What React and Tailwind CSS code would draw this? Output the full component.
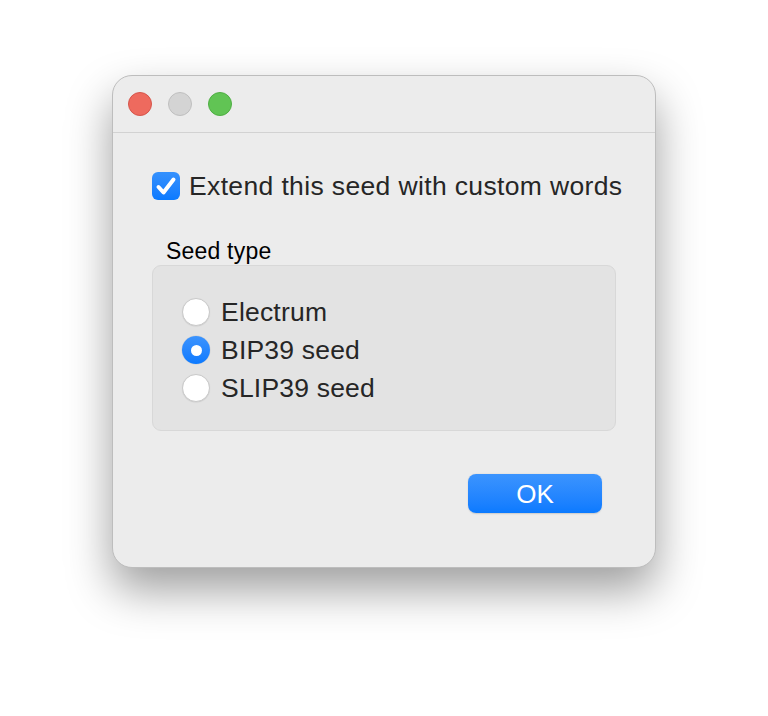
import React from "react";

function Radio({ checked, label }) {
  return (
    <div className="flex items-center h-[38px]">
      {checked ? (
        <div className="w-[28px] h-[28px] rounded-full bg-gradient-to-b from-[#3b93fd] to-[#0a7aff] flex items-center justify-center shadow-[0_0_0_0.5px_rgba(0,0,0,0.1)]">
          <div className="w-[11px] h-[11px] rounded-full bg-white" />
        </div>
      ) : (
        <div className="w-[28px] h-[28px] rounded-full bg-white border border-[#c9c9c9] shadow-[0_0.5px_1px_rgba(0,0,0,0.1)]" />
      )}
      <span className="ml-[11px] text-[26.5px] tracking-[0.2px] text-[#262626] leading-none whitespace-nowrap">{label}</span>
    </div>
  );
}

export default function App() {
  return (
    <div
      className="w-[768px] h-[716px] bg-white relative overflow-hidden"
      style={{ fontFamily: '"Liberation Sans", Arial, sans-serif' }}
    >
      <div className="absolute left-[112px] top-[75px] w-[544px] h-[493px] rounded-[20px] bg-[#ececec] border border-[#bdbdbd] shadow-[0_22px_45px_rgba(0,0,0,0.38)] flex flex-col overflow-hidden">
        {/* Title bar */}
        <div className="h-[57px] shrink-0 flex items-center pl-[15px] gap-[16px] border-b border-[#d2d2d2]">
          <div className="w-[24px] h-[24px] rounded-full bg-[#ee6a5e] border border-[#d5554b]" />
          <div className="w-[24px] h-[24px] rounded-full bg-[#d4d4d4] border border-[#bfbfbf]" />
          <div className="w-[24px] h-[24px] rounded-full bg-[#61c454] border border-[#4fae43]" />
        </div>

        {/* Content */}
        <div className="flex flex-col pl-[39px] pr-[20px]">
          <div className="flex items-center mt-[39px] h-[28px]">
            <div className="w-[28px] h-[28px] shrink-0 rounded-[6px] bg-gradient-to-b from-[#3591fd] to-[#0a7aff] flex items-center justify-center">
              <svg width="22" height="20" viewBox="0 0 22 20" fill="none">
                <path d="M3.5 11 L8.5 16.5 L18.5 3.5" stroke="white" strokeWidth="4" strokeLinecap="round" strokeLinejoin="round" />
              </svg>
            </div>
            <span className="ml-[9px] text-[26.5px] tracking-[0.36px] text-[#262626] leading-none whitespace-nowrap">Extend this seed with custom words</span>
          </div>

          <div className="mt-[40px] ml-[14px] text-[23px] tracking-[0.2px] text-black leading-none">Seed type</div>

          <div className="mt-[2px] w-[464px] h-[166px] rounded-[9px] bg-[#e3e3e3] border border-[#d8d8d8] pl-[29px] pt-[27px] flex flex-col">
            <Radio label="Electrum" />
            <Radio checked label="BIP39 seed" />
            <Radio label="SLIP39 seed" />
          </div>

          <div className="flex justify-end mt-[43px] w-[464px] pr-[14px]">
            <div className="w-[134px] h-[39px] rounded-[8px] bg-gradient-to-b from-[#3b94fe] to-[#0a7aff] flex items-center justify-center text-white text-[26px] leading-none shadow-[0_0.5px_1.5px_rgba(0,0,0,0.15)]">
              OK
            </div>
          </div>
        </div>
      </div>
    </div>
  );
}
